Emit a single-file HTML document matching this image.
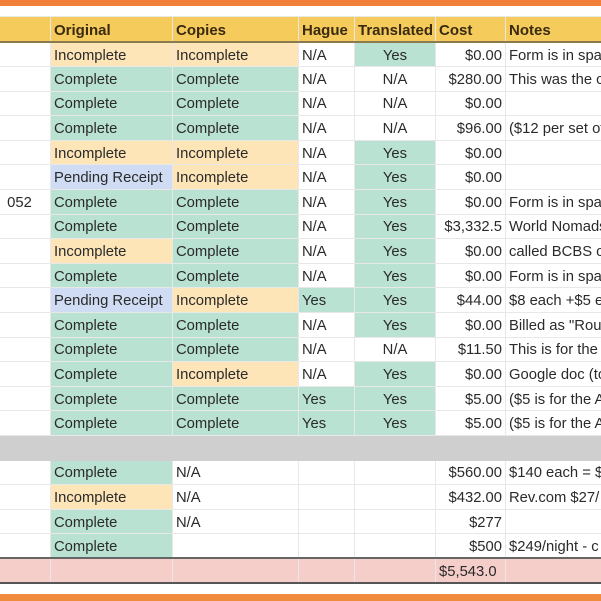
<!DOCTYPE html>
<html><head><style>
html,body{margin:0;padding:0;width:601px;height:601px;overflow:hidden;background:#fff;font-family:"Liberation Sans",sans-serif;}
.top{position:absolute;left:0;top:0;width:601px;height:6px;background:#f07f3a;}
.bot{position:absolute;left:0;top:594px;width:601px;height:7px;background:#f08a3c;}
table{position:absolute;left:-1px;top:16px;border-collapse:collapse;table-layout:fixed;width:641px;}
td{height:24.6px;padding:2px 3px 0 3px;border:1px solid #e8e8e8;font-size:14.8px;color:#2a2a2a;white-space:nowrap;overflow:hidden;box-sizing:border-box;}
tr.h td{background:#f5cb5c;font-weight:bold;font-size:15px;color:#3a2a10;border-bottom:2px solid #8a7a50;height:25.5px;}
.G{background:#b9e2d3}.O{background:#fde5b8}.B{background:#cfdcf3}
.c{text-align:center}.r{text-align:right}
tr.gray td{background:#cfcfcf;border-color:#cfcfcf}
tr.tot td{background:#f5cdc9;border-top:2px solid #666;border-bottom:2px solid #555;}
</style></head><body>
<div class="top"></div>
<table>
<colgroup><col style="width:51px"><col style="width:122px"><col style="width:126px"><col style="width:56px"><col style="width:81px"><col style="width:70px"><col style="width:135px"></colgroup>
<tr class="h"><td></td><td>Original</td><td>Copies</td><td>Hague</td><td>Translated</td><td>Cost</td><td>Notes</td></tr>
<tr><td></td><td class="O">Incomplete</td><td class="O">Incomplete</td><td>N/A</td><td class="G c">Yes</td><td class="r">$0.00</td><td>Form is in spanish</td></tr>
<tr><td></td><td class="G">Complete</td><td class="G">Complete</td><td>N/A</td><td class="c">N/A</td><td class="r">$280.00</td><td>This was the cost</td></tr>
<tr><td></td><td class="G">Complete</td><td class="G">Complete</td><td>N/A</td><td class="c">N/A</td><td class="r">$0.00</td><td></td></tr>
<tr><td></td><td class="G">Complete</td><td class="G">Complete</td><td>N/A</td><td class="c">N/A</td><td class="r">$96.00</td><td>($12 per set of</td></tr>
<tr><td></td><td class="O">Incomplete</td><td class="O">Incomplete</td><td>N/A</td><td class="G c">Yes</td><td class="r">$0.00</td><td></td></tr>
<tr><td></td><td class="B">Pending Receipt</td><td class="O">Incomplete</td><td>N/A</td><td class="G c">Yes</td><td class="r">$0.00</td><td></td></tr>
<tr><td>&nbsp;052</td><td class="G">Complete</td><td class="G">Complete</td><td>N/A</td><td class="G c">Yes</td><td class="r">$0.00</td><td>Form is in spanish</td></tr>
<tr><td></td><td class="G">Complete</td><td class="G">Complete</td><td>N/A</td><td class="G c">Yes</td><td class="r">$3,332.5</td><td>World Nomads</td></tr>
<tr><td></td><td class="O">Incomplete</td><td class="G">Complete</td><td>N/A</td><td class="G c">Yes</td><td class="r">$0.00</td><td>called BCBS on</td></tr>
<tr><td></td><td class="G">Complete</td><td class="G">Complete</td><td>N/A</td><td class="G c">Yes</td><td class="r">$0.00</td><td>Form is in spanish</td></tr>
<tr><td></td><td class="B">Pending Receipt</td><td class="O">Incomplete</td><td class="G">Yes</td><td class="G c">Yes</td><td class="r">$44.00</td><td>$8 each +$5 ea</td></tr>
<tr><td></td><td class="G">Complete</td><td class="G">Complete</td><td>N/A</td><td class="G c">Yes</td><td class="r">$0.00</td><td>Billed as "Round</td></tr>
<tr><td></td><td class="G">Complete</td><td class="G">Complete</td><td>N/A</td><td class="c">N/A</td><td class="r">$11.50</td><td>This is for the</td></tr>
<tr><td></td><td class="G">Complete</td><td class="O">Incomplete</td><td>N/A</td><td class="G c">Yes</td><td class="r">$0.00</td><td>Google doc (to</td></tr>
<tr><td></td><td class="G">Complete</td><td class="G">Complete</td><td class="G">Yes</td><td class="G c">Yes</td><td class="r">$5.00</td><td>($5 is for the A</td></tr>
<tr><td></td><td class="G">Complete</td><td class="G">Complete</td><td class="G">Yes</td><td class="G c">Yes</td><td class="r">$5.00</td><td>($5 is for the A</td></tr>
<tr class="gray"><td></td><td></td><td></td><td></td><td></td><td></td><td></td></tr>
<tr><td></td><td class="G">Complete</td><td>N/A</td><td></td><td></td><td class="r">$560.00</td><td>$140 each = $</td></tr>
<tr><td></td><td class="O">Incomplete</td><td>N/A</td><td></td><td></td><td class="r">$432.00</td><td>Rev.com $27/</td></tr>
<tr><td></td><td class="G">Complete</td><td>N/A</td><td></td><td></td><td class="r">$277</td><td></td></tr>
<tr><td></td><td class="G">Complete</td><td></td><td></td><td></td><td class="r">$500</td><td>$249/night - c</td></tr>
<tr class="tot"><td></td><td></td><td></td><td></td><td></td><td>$5,543.0</td><td></td></tr>
</table>
<div class="bot"></div>
</body></html>
